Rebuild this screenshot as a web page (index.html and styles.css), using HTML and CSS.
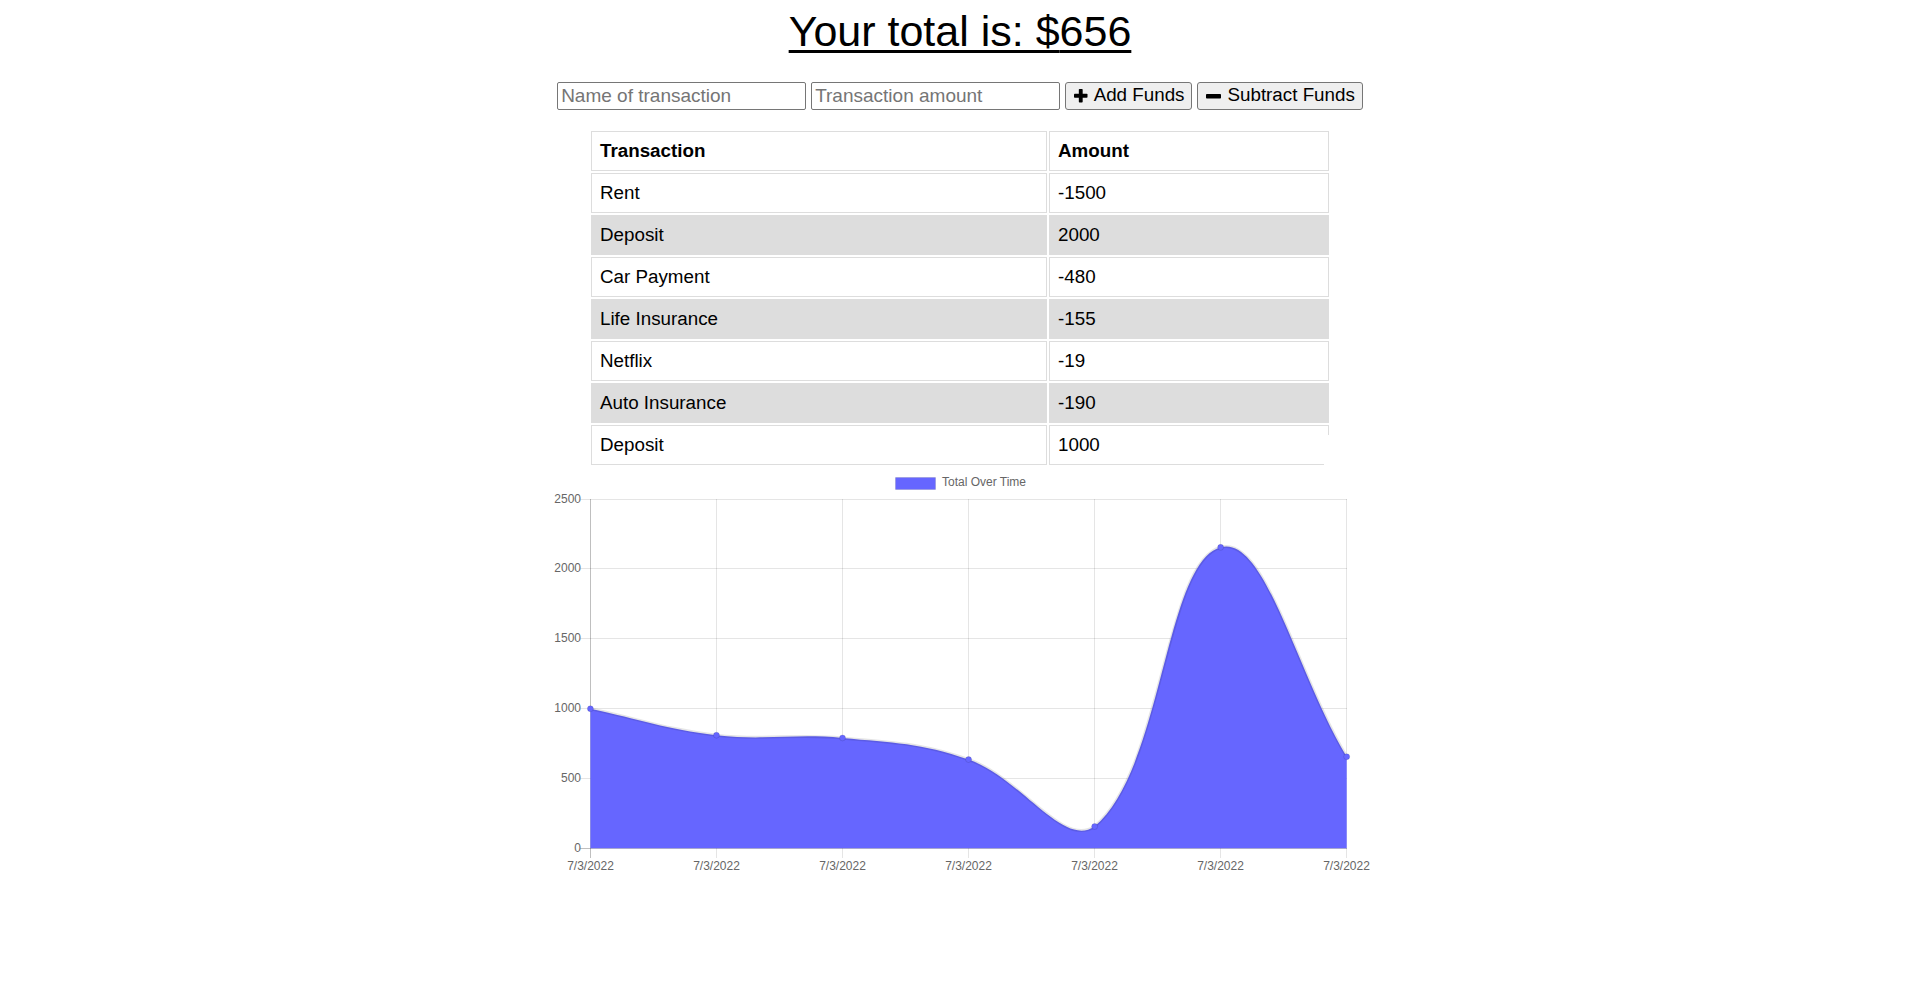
FILE: index.html
```html
<!DOCTYPE html>
<html lang="en">
<head>
<meta charset="utf-8">
<title>Budget Tracker</title>
<link rel="stylesheet" href="styles.css">
</head>
<body>
<div class="page">
  <h1 class="total">Your total is: $<span>656</span></h1>

  <div class="form">
    <input class="field" type="text" placeholder="Name of transaction">
    <input class="field" type="number" placeholder="Transaction amount">
    <button class="btn" type="button">
      <svg class="ico-plus" viewBox="0 0 14 14" width="14" height="14"><rect x="5" y="0" width="4" height="14" rx="0.8"/><rect x="0" y="5" width="14" height="4" rx="0.8"/></svg>
      <span>Add Funds</span>
    </button>
    <button class="btn" type="button">
      <svg class="ico-minus" viewBox="0 0 15 5" width="15" height="5"><rect x="0" y="0" width="15" height="4.5" rx="0.8"/></svg>
      <span>Subtract Funds</span>
    </button>
  </div>

  <table class="tx">
    <thead>
      <tr><th>Transaction</th><th>Amount</th></tr>
    </thead>
    <tbody>
      <tr><td>Rent</td><td>-1500</td></tr>
      <tr><td>Deposit</td><td>2000</td></tr>
      <tr><td>Car Payment</td><td>-480</td></tr>
      <tr><td>Life Insurance</td><td>-155</td></tr>
      <tr><td>Netflix</td><td>-19</td></tr>
      <tr><td>Auto Insurance</td><td>-190</td></tr>
      <tr><td>Deposit</td><td>1000</td></tr>
    </tbody>
  </table>

  <svg class="chart" width="840" height="420" viewBox="540 467 840 420">
    <g class="legend">
      <rect x="895.5" y="477.5" width="40" height="12" class="legend-box"/>
      <text x="942" y="486" class="lbl">Total Over Time</text>
    </g>
    <g class="grid">
      <line x1="580" y1="499.5" x2="1347" y2="499.5"/>
      <line x1="580" y1="568.5" x2="1347" y2="568.5"/>
      <line x1="580" y1="638.5" x2="1347" y2="638.5"/>
      <line x1="580" y1="708.5" x2="1347" y2="708.5"/>
      <line x1="580" y1="778.5" x2="1347" y2="778.5"/>
      <line x1="716.5" y1="499" x2="716.5" y2="858"/>
      <line x1="842.5" y1="499" x2="842.5" y2="858"/>
      <line x1="968.5" y1="499" x2="968.5" y2="858"/>
      <line x1="1094.5" y1="499" x2="1094.5" y2="858"/>
      <line x1="1220.5" y1="499" x2="1220.5" y2="858"/>
      <line x1="1346.5" y1="499" x2="1346.5" y2="858"/>
    </g>
    <g class="zero">
      <line x1="580" y1="848.5" x2="1347" y2="848.5"/>
      <line x1="590.5" y1="499" x2="590.5" y2="858"/>
    </g>
    <path class="area" d="M590.4,708.7 C640.82,719.3 665.49,729.3 716.45,735.2 C766.33,740.98 792.44,733.07 842.5,737.9 C893.28,742.79 920.9,742.75 968.55,759.5 C1021.74,778.19 1062.55,848.3 1094.6,826.5 C1163.39,768.6 1164.56,562.83 1220.65,547.3 C1265.4,534.91 1296.28,672.94 1346.7,756.7 L1346.7,848.3 L590.4,848.3 Z"/>
    <path class="curve" d="M590.4,708.7 C640.82,719.3 665.49,729.3 716.45,735.2 C766.33,740.98 792.44,733.07 842.5,737.9 C893.28,742.79 920.9,742.75 968.55,759.5 C1021.74,778.19 1062.55,848.3 1094.6,826.5 C1163.39,768.6 1164.56,562.83 1220.65,547.3 C1265.4,534.91 1296.28,672.94 1346.7,756.7"/>
    <g class="pts">
      <circle cx="590.4" cy="708.7" r="3"/>
      <circle cx="716.45" cy="735.2" r="3"/>
      <circle cx="842.5" cy="737.9" r="3"/>
      <circle cx="968.55" cy="759.5" r="3"/>
      <circle cx="1094.6" cy="826.5" r="3"/>
      <circle cx="1220.65" cy="547.3" r="3"/>
      <circle cx="1346.7" cy="756.7" r="3"/>
    </g>
    <g class="ylbl">
      <text x="581" y="503">2500</text>
      <text x="581" y="572">2000</text>
      <text x="581" y="642">1500</text>
      <text x="581" y="712">1000</text>
      <text x="581" y="782">500</text>
      <text x="581" y="852">0</text>
    </g>
    <g class="xlbl">
      <text x="590.5" y="869.5">7/3/2022</text>
      <text x="716.5" y="869.5">7/3/2022</text>
      <text x="842.5" y="869.5">7/3/2022</text>
      <text x="968.5" y="869.5">7/3/2022</text>
      <text x="1094.5" y="869.5">7/3/2022</text>
      <text x="1220.5" y="869.5">7/3/2022</text>
      <text x="1346.5" y="869.5">7/3/2022</text>
    </g>
  </svg>

  <div class="mask"></div>
</div>
</body>
</html>
```

FILE: styles.css
```css
* {
  box-sizing: border-box;
}

html, body {
  margin: 0;
  padding: 0;
  background: #ffffff;
}

body {
  font-family: "Liberation Sans", Arial, Helvetica, sans-serif;
  color: #000000;
}

.page {
  position: relative;
  width: 1920px;
  min-height: 999px;
}

.total {
  margin: 7px 0 0;
  font-size: 43px;
  line-height: 49px;
  font-weight: normal;
  text-align: center;
  text-decoration: underline;
  text-decoration-thickness: 3px;
  text-underline-offset: 4px;
}

.form {
  display: flex;
  justify-content: center;
  align-items: center;
  gap: 5px;
  margin-top: 26px;
  height: 28px;
}

.field {
  width: 249px;
  height: 28px;
  padding: 1px 3px;
  border: 1px solid #767676;
  border-radius: 2px;
  font-family: "Liberation Sans", Arial, sans-serif;
  font-size: 19px;
  color: #000000;
  background: #ffffff;
  -moz-appearance: textfield;
}

.field::-webkit-outer-spin-button,
.field::-webkit-inner-spin-button {
  -webkit-appearance: none;
  margin: 0;
}

.field::placeholder {
  color: #757575;
}

.btn {
  display: inline-flex;
  align-items: center;
  gap: 6px;
  height: 28px;
  padding: 0 7px 0 8px;
  border: 1px solid #767676;
  border-radius: 3px;
  background: #efefef;
  font-family: "Liberation Sans", Arial, sans-serif;
  font-size: 18.8px;
  color: #000000;
}

.btn span {
  line-height: 26px;
  margin-top: -2px;
}

.btn svg {
  fill: #000000;
  display: block;
}

.ico-plus {
  width: 13.5px;
  height: 13.5px;
}

.ico-minus {
  width: 15px;
  height: 5px;
}

.tx {
  border-collapse: separate;
  border-spacing: 2px;
  width: 742px;
  margin: 19px auto 0;
  font-size: 18.8px;
}

.tx th,
.tx td {
  border: 1px solid #dddddd;
  padding: 0 9px 0 8px;
  line-height: 38px;
  text-align: left;
  vertical-align: middle;
}

.tx th {
  font-weight: bold;
}

.tx th:first-child,
.tx td:first-child {
  width: 456px;
}

.tx tbody tr:nth-child(even) td {
  background: #dddddd;
}

.chart {
  display: block;
  margin: 0 auto;
  font-family: "Liberation Sans", Arial, Helvetica, sans-serif;
}

.chart .lbl,
.chart .ylbl text,
.chart .xlbl text {
  font-size: 12px;
  fill: #666666;
}

.chart .ylbl text {
  text-anchor: end;
}

.chart .xlbl text {
  text-anchor: middle;
}

.grid line {
  stroke: rgba(0, 0, 0, 0.1);
  stroke-width: 1;
  shape-rendering: crispEdges;
}

.zero line {
  stroke: rgba(0, 0, 0, 0.25);
  stroke-width: 1;
  shape-rendering: crispEdges;
}

.legend-box {
  fill: #6666ff;
  stroke: rgba(0, 0, 0, 0.1);
  stroke-width: 1;
}

.area {
  fill: #6666ff;
}

.curve {
  fill: none;
  stroke: rgba(0, 0, 0, 0.1);
  stroke-width: 3;
}

.pts circle {
  fill: #6666ff;
  stroke: rgba(0, 0, 0, 0.1);
  stroke-width: 1;
}

.mask {
  position: absolute;
  left: 1324px;
  top: 428px;
  width: 9px;
  height: 39px;
  background: #ffffff;
}
```
